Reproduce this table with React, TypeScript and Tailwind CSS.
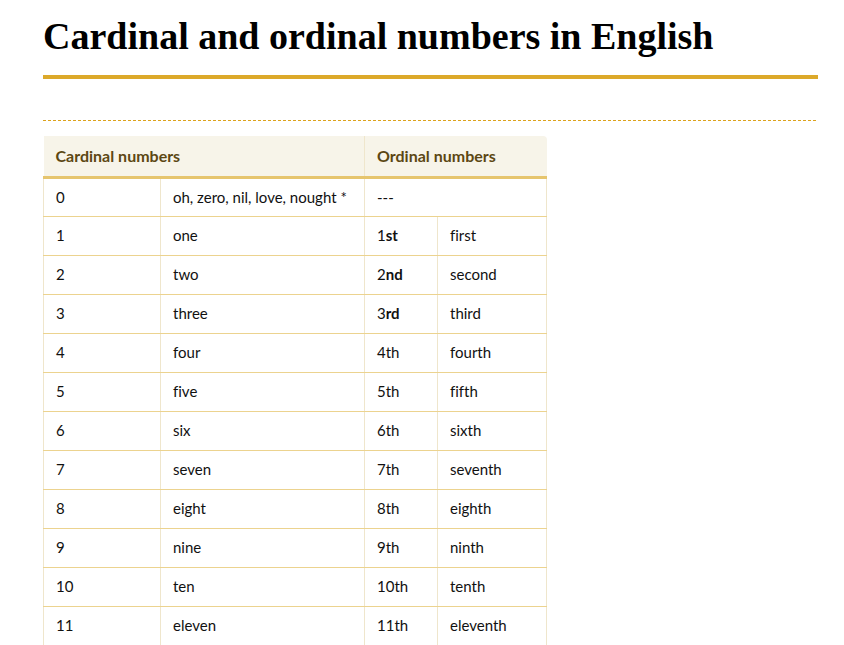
import React from 'react';

const rows: [string, string, string, string][] = [
  ['1', 'one', '1|st', 'first'],
  ['2', 'two', '2|nd', 'second'],
  ['3', 'three', '3|rd', 'third'],
  ['4', 'four', '4th', 'fourth'],
  ['5', 'five', '5th', 'fifth'],
  ['6', 'six', '6th', 'sixth'],
  ['7', 'seven', '7th', 'seventh'],
  ['8', 'eight', '8th', 'eighth'],
  ['9', 'nine', '9th', 'ninth'],
  ['10', 'ten', '10th', 'tenth'],
  ['11', 'eleven', '11th', 'eleventh'],
];

const td = 'h-[39px] px-[12px] border-b border-[#ecd38f] align-middle';

const Ordinal = ({ value }: { value: string }) => {
  if (!value.includes('|')) return <>{value}</>;
  const [n, suffix] = value.split('|');
  return (
    <>
      {n}
      <b className="font-bold">{suffix}</b>
    </>
  );
};

export default function App() {
  return (
    <div
      className="bg-white min-h-[645px] pl-[43px] pr-[26px] pt-[13px] [font-variant-ligatures:none]"
      style={{ fontFamily: 'Lato, "Noto Sans", sans-serif' }}
    >
      <h1
        className="text-[38px] leading-[46px] font-bold text-black pb-[16px] border-b-[4px] border-[#dca92a]"
        style={{ fontFamily: '"Liberation Serif", "DejaVu Serif", serif' }}
      >
        Cardinal and ordinal numbers in English
      </h1>
      {/* dashed separator */}
      <div className="mt-[41px] h-px bg-[repeating-linear-gradient(90deg,#dca21c_0px,#dca21c_3px,#ffffff_3px,#ffffff_5px)]" />

      <table className="mt-[15px] w-[503px] border-collapse table-fixed text-[15px] text-[#111]">
        <colgroup>
          <col className="w-[117px]" />
          <col className="w-[204px]" />
          <col className="w-[73px]" />
          <col className="w-[109px]" />
        </colgroup>
        <thead>
          <tr className="bg-[#f7f4e9] text-[#5c4713] text-left text-[16px]">
            <th colSpan={2} className="h-[41px] px-[12px] font-bold border-b-[3px] border-[#e6c56e] border-r border-r-[#efe6cc]">
              Cardinal numbers
            </th>
            <th colSpan={2} className="h-[41px] px-[12px] font-bold border-b-[3px] border-[#e6c56e] rounded-tr-[4px]">
              Ordinal numbers
            </th>
          </tr>
        </thead>
        <tbody>
          <tr>
            <td className={`${td} border-l border-l-[#efe6cc] border-r border-r-[#efe6cc]`}>0</td>
            <td className={`${td} border-r border-r-[#efe6cc]`}>oh, zero, nil, love, nought *</td>
            <td colSpan={2} className={`${td} border-r border-r-[#efe6cc]`}>---</td>
          </tr>
          {rows.map((r) => (
            <tr key={r[0]}>
              <td className={`${td} border-l border-l-[#efe6cc] border-r border-r-[#efe6cc]`}>{r[0]}</td>
              <td className={`${td} border-r border-r-[#efe6cc]`}>{r[1]}</td>
              <td className={`${td} border-r border-r-[#efe6cc]`}>
                <Ordinal value={r[2]} />
              </td>
              <td className={`${td} border-r border-r-[#efe6cc]`}>{r[3]}</td>
            </tr>
          ))}
        </tbody>
      </table>
    </div>
  );
}
